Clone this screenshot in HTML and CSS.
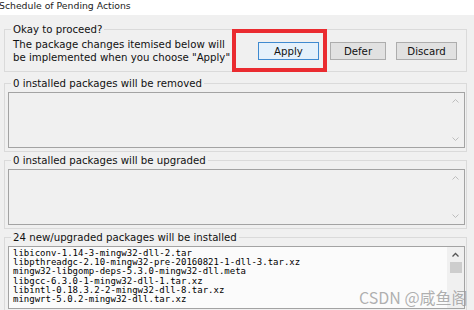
FILE: index.html
```html
<!DOCTYPE html>
<html>
<head>
<meta charset="utf-8">
<link rel="stylesheet" href="styles.css">
</head>
<body>
<div class="titlebar">Schedule of Pending Actions</div>
<main class="main">
  <fieldset class="group group-proceed">
    <legend class="legend legend-first">Okay to proceed?</legend>
    <div class="proceed-row">
      <p class="proceed-text">The package changes itemised below will<br>be implemented when you choose "Apply"</p>
      <div class="buttons">
        <button class="btn btn-default">Apply</button>
        <button class="btn btn-defer">Defer</button>
        <button class="btn">Discard</button>
      </div>
    </div>
  </fieldset>

  <fieldset class="group">
    <legend class="legend">0 installed packages will be removed</legend>
    <div class="listbox">
      <div class="list-content"></div>
      <div class="scrollbar">
        <span class="arrow"><svg width="7" height="5" viewBox="0 0 7 5"><polyline points="0.5,4.5 3.5,1.5 6.5,4.5" fill="none" stroke="#bdbdbd" stroke-width="1"/></svg></span>
        <span class="track"></span>
        <span class="arrow"><svg width="7" height="5" viewBox="0 0 7 5"><polyline points="0.5,0.5 3.5,3.5 6.5,0.5" fill="none" stroke="#bdbdbd" stroke-width="1"/></svg></span>
      </div>
    </div>
  </fieldset>

  <fieldset class="group">
    <legend class="legend">0 installed packages will be upgraded</legend>
    <div class="listbox">
      <div class="list-content"></div>
      <div class="scrollbar">
        <span class="arrow"><svg width="7" height="5" viewBox="0 0 7 5"><polyline points="0.5,4.5 3.5,1.5 6.5,4.5" fill="none" stroke="#bdbdbd" stroke-width="1"/></svg></span>
        <span class="track"></span>
        <span class="arrow"><svg width="7" height="5" viewBox="0 0 7 5"><polyline points="0.5,0.5 3.5,3.5 6.5,0.5" fill="none" stroke="#bdbdbd" stroke-width="1"/></svg></span>
      </div>
    </div>
  </fieldset>

  <fieldset class="group">
    <legend class="legend">24 new/upgraded packages will be installed</legend>
    <div class="listbox listbox-active">
      <div class="list-content mono">
        <div>libiconv-1.14-3-mingw32-dll-2.tar</div>
        <div>libpthreadgc-2.10-mingw32-pre-20160821-1-dll-3.tar.xz</div>
        <div>mingw32-libgomp-deps-5.3.0-mingw32-dll.meta</div>
        <div>libgcc-6.3.0-1-mingw32-dll-1.tar.xz</div>
        <div>libintl-0.18.3.2-2-mingw32-dll-8.tar.xz</div>
        <div>mingwrt-5.0.2-mingw32-dll.tar.xz</div>
      </div>
      <div class="scrollbar">
        <span class="arrow"><svg width="7" height="5" viewBox="0 0 7 5"><polyline points="0.5,4.5 3.5,1.5 6.5,4.5" fill="none" stroke="#555" stroke-width="1.3"/></svg></span>
        <span class="thumb"></span>
        <span class="track"></span>
      </div>
    </div>
  </fieldset>
</main>
<div class="highlight"></div>
<div class="watermark">CSDN @咸鱼阁</div>
</body>
</html>
```

FILE: styles.css
```css
html, body {
  margin: 0;
  padding: 0;
}
body {
  position: relative;
  width: 474px;
  height: 310px;
  overflow: hidden;
  background: #f0f0f0;
  font-family: "DejaVu Sans", Verdana, sans-serif;
  font-size: 10.2px;
  color: #111;
}
.titlebar {
  height: 15px;
  background: #ffffff;
  line-height: 12px;
  margin-left: -1px;
  font-size: 9.3px;
  color: #222;
}
.main {
  display: flex;
  flex-direction: column;
  padding: 0 7px 0 4px;
}
.group {
  margin: 2px 0 0 0;
  padding: 2px 1px 3px 3px;
  border: 1px solid #dadada;
  min-width: 0;
}
.group-proceed {
  margin-top: 8px;
  padding: 1px 9px 7px 8px;
}
.legend {
  padding: 0 2px;
  margin-left: 3px;
  line-height: 13px;
  height: 13px;
}
.legend-first {
  margin-left: -2px;
}
.group-proceed + .group {
  margin-top: 5px;
}
.proceed-row {
  display: flex;
  align-items: flex-start;
  justify-content: space-between;
}
.proceed-text {
  margin: 0;
  line-height: 13px;
  padding-top: 1px;
  white-space: nowrap;
}
.buttons {
  display: flex;
  margin-top: 5px;
}
.btn {
  font-family: "DejaVu Sans", Verdana, sans-serif;
  font-size: 10.2px;
  color: #111;
  height: 18px;
  width: 61px;
  padding: 0;
  margin: 0 0 0 10px;
  border: 1px solid #adadad;
  background: #e1e1e1;
  box-sizing: border-box;
}
.btn-default {
  border-color: #3f8ad0;
  background: #e5f1fb;
  margin-left: 0;
}
.btn-defer {
  width: 56px;
  margin-left: 11px;
}
.listbox {
  display: flex;
  height: 56px;
  border: 1px solid #a3a3a3;
  background: #f0f0f0;
  box-sizing: border-box;
}
.listbox-active {
  height: 63px;
  background: #fbfbfb;
}
.list-content {
  flex: 1;
  overflow: hidden;
}
.mono {
  font-family: "DejaVu Sans Mono", "Liberation Mono", monospace;
  font-size: 9px;
  line-height: 9.2px;
  padding: 2px 0 0 4px;
  color: #000;
  white-space: nowrap;
}
.scrollbar {
  width: 17px;
  display: flex;
  flex-direction: column;
  background: #f0f0f0;
}
.arrow {
  height: 15px;
  display: flex;
  align-items: center;
  justify-content: center;
}
.track {
  flex: 1;
}
.thumb {
  height: 11px;
  margin: 0 2px 0 3px;
  background: #cdcdcd;
}
.highlight {
  position: absolute;
  left: 232px;
  top: 29px;
  width: 95px;
  height: 43px;
  border: 4px solid #ea2b30;
  box-sizing: border-box;
}
.watermark {
  position: absolute;
  left: 359px;
  top: 288px;
  font-family: "Noto Sans CJK SC", "DejaVu Sans", sans-serif;
  font-size: 16px;
  line-height: 18px;
  color: rgba(150, 150, 150, 0.75);
  white-space: nowrap;
}
```
